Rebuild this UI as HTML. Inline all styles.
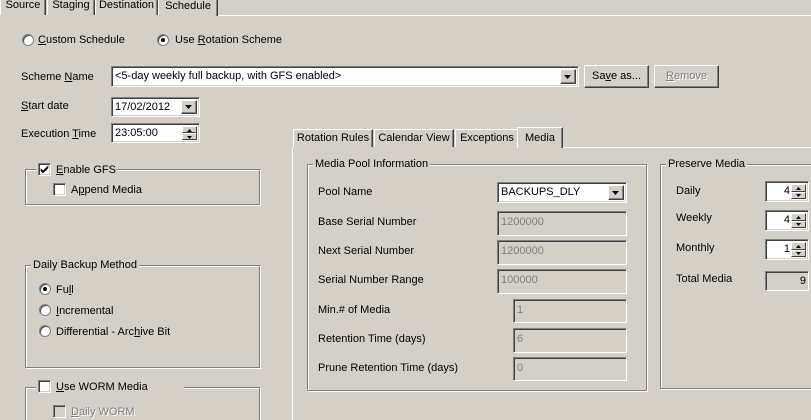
<!DOCTYPE html>
<html><head><style>
html,body{margin:0;width:811px;height:420px;overflow:hidden}
body{background:#d4d0c8;position:relative;font-family:"Liberation Sans",Arial,sans-serif;font-size:11px;color:#000}
.a{position:absolute;white-space:nowrap}
.t{position:absolute;white-space:nowrap;line-height:13px}
.sunk{position:absolute;background:#fff;border:1px solid;border-color:#808080 #fff #fff #808080;box-shadow:inset 1px 1px #404040,inset -1px -1px #d4d0c8;box-sizing:border-box;padding-left:3px;white-space:nowrap}
.dis{background:#d4d0c8;color:#808080}
.btn{position:absolute;box-sizing:border-box;border:1px solid;border-color:#fff #404040 #404040 #fff;box-shadow:inset -1px -1px #808080;text-align:center;background:#d4d0c8}
.dd{position:absolute;right:2px;top:2px;width:16px;height:calc(100% - 4px);box-sizing:border-box;border:1px solid;border-color:#fff #404040 #404040 #fff;box-shadow:inset -1px -1px #808080;background:#d4d0c8}
.dd svg{position:absolute;left:3px;top:50%;margin-top:-2px}
.grp{position:absolute;box-sizing:border-box;border:1px solid #808080;box-shadow:inset 1px 1px #fff,1px 1px #fff}
.lab{position:absolute;top:-7px;background:#d4d0c8;padding:0 2px;line-height:13px}
.rad{position:absolute;width:12px;height:12px;border-radius:50%;background:#fff;box-sizing:border-box;border:1px solid #808080;box-shadow:inset 1px 1px #404040}
.rad.on:after{content:"";position:absolute;left:3px;top:3px;width:4px;height:4px;border-radius:50%;background:#000}
.chk{position:absolute;width:13px;height:13px;background:#fff;box-sizing:border-box;border:1px solid;border-color:#808080 #fff #fff #808080;box-shadow:inset 1px 1px #404040,inset -1px -1px #d4d0c8}
.tab{position:absolute;box-sizing:border-box;border:1px solid;border-color:#fff #404040 transparent #fff;border-bottom:0;box-shadow:inset -1px 0 #808080;text-align:center;line-height:14px}
.spin{position:absolute;right:2px;width:15px;top:2px;height:calc(100% - 4px)}
.spin div{position:absolute;left:0;right:0;height:50%;box-sizing:border-box;border:1px solid;border-color:#fff #404040 #404040 #fff;background:#d4d0c8}
.spin div svg{position:absolute;left:4px;top:50%;margin-top:-1px}
u{text-decoration:underline}
</style></head><body>
<!-- top tabs -->
<div class="tab" style="left:0;top:-3px;width:46px;height:18px">Source</div>
<div class="tab" style="left:47px;top:-3px;width:48px;height:18px">Staging</div>
<div class="tab" style="left:95px;top:-3px;width:63px;height:18px">Destination</div>
<div class="tab" style="left:158px;top:-3px;width:60px;height:19px;background:#d4d0c8;line-height:16px">Schedule</div>
<div class="a" style="left:218px;top:15px;width:593px;height:1px;background:#fff"></div>

<div class="rad" style="left:22px;top:34px"></div><div class="t" style="left:38px;top:34px"><u>C</u>ustom Schedule</div>
<div class="rad on" style="left:157px;top:34px"></div><div class="t" style="left:175px;top:34px">Use <u>R</u>otation Scheme</div>

<div class="t" style="left:21px;top:71px">Scheme <u>N</u>ame</div>
<div class="sunk" style="left:111px;top:66px;width:468px;height:21px;line-height:19px">&lt;5-day weekly full backup, with GFS enabled&gt;<div class="dd"><svg width="9" height="5"><path d="M0 0h7l-3.5 4z" fill="#000"/></svg></div></div>
<div class="btn" style="left:584px;top:65px;width:65px;height:23px;line-height:20px">Sa<u>v</u>e as...</div>
<div class="btn" style="left:654px;top:65px;width:65px;height:23px;line-height:20px;color:#808080;text-shadow:1px 1px #fff"><u>R</u>emove</div>

<div class="t" style="left:21px;top:100px"><u>S</u>tart date</div>
<div class="sunk" style="left:111px;top:97px;width:89px;height:20px;line-height:18px">17/02/2012<div class="dd"><svg width="9" height="5"><path d="M0 0h7l-3.5 4z" fill="#000"/></svg></div></div>
<div class="t" style="left:21px;top:128px">Execution <u>T</u>ime</div>
<div class="sunk" style="left:111px;top:123px;width:89px;height:20px;line-height:18px">23:05:00<div class="spin"><div style="top:0"><svg width="5" height="3"><path d="M0 3h5L2.5 0z"/></svg></div><div style="bottom:0"><svg width="5" height="3"><path d="M0 0h5L2.5 3z"/></svg></div></div></div>

<!-- GFS -->
<div class="grp" style="left:25px;top:169px;width:235px;height:36px"></div>
<div class="a" style="left:36px;top:162px;width:80px;height:14px;background:#d4d0c8"></div>
<div class="chk" style="left:38px;top:163px"><svg style="position:absolute;left:1px;top:1px" width="9" height="9"><path d="M1 4l2 2 5-5v2l-5 5-2-2z" fill="#000" stroke="#000" stroke-width="0.6"/></svg></div>
<div class="t" style="left:56px;top:164px"><u>E</u>nable GFS</div>
<div class="chk" style="left:53px;top:183px"></div><div class="t" style="left:71px;top:184px">A<u>p</u>pend Media</div>

<!-- Daily Backup -->
<div class="grp" style="left:25px;top:265px;width:235px;height:103px"><div class="lab" style="left:5px">Daily Backup Method</div></div>
<div class="rad on" style="left:39px;top:283px"></div><div class="t" style="left:56px;top:284px">Fu<u>l</u>l</div>
<div class="rad" style="left:39px;top:304px"></div><div class="t" style="left:56px;top:305px"><u>I</u>ncremental</div>
<div class="rad" style="left:39px;top:325px"></div><div class="t" style="left:56px;top:326px">Differential - Arc<u>h</u>ive Bit</div>

<!-- WORM -->
<div class="grp" style="left:25px;top:387px;width:235px;height:50px"></div>
<div class="a" style="left:36px;top:379px;width:148px;height:14px;background:#d4d0c8"></div>
<div class="chk" style="left:38px;top:380px"></div><div class="t" style="left:56px;top:381px"><u>U</u>se WORM Media</div>
<div class="chk" style="left:53px;top:405px;background:#d4d0c8"></div><div class="t" style="left:71px;top:406px;color:#808080;text-shadow:1px 1px #fff"><u>D</u>aily WORM</div>

<!-- inner tabs -->
<div class="a" style="left:292px;top:147px;width:1px;height:273px;background:#fff"></div>
<div class="a" style="left:562px;top:147px;width:249px;height:1px;background:#fff"></div>
<div class="tab" style="left:293px;top:129px;width:80px;height:18px;line-height:16px">Rotation Rules</div>
<div class="tab" style="left:374px;top:129px;width:80px;height:18px;line-height:16px">Calendar View</div>
<div class="tab" style="left:455px;top:129px;width:64px;height:18px;line-height:16px">Exceptions</div>
<div class="tab" style="left:517px;top:127px;width:46px;height:21px;background:#d4d0c8;line-height:20px">Media</div>

<!-- Media Pool -->
<div class="grp" style="left:307px;top:164px;width:340px;height:227px"><div class="lab" style="left:5px">Media Pool Information</div></div>
<div class="t" style="left:318px;top:186px">Pool Name</div>
<div class="sunk" style="left:497px;top:182px;width:130px;height:21px;line-height:19px">BACKUPS_DLY<div class="dd"><svg width="9" height="5"><path d="M0 0h7l-3.5 4z" fill="#000"/></svg></div></div>
<div class="t" style="left:318px;top:216px">Base Serial Number</div>
<div class="sunk dis" style="left:497px;top:211px;width:130px;height:25px;line-height:21px">1200000</div>
<div class="t" style="left:318px;top:245px">Next Serial Number</div>
<div class="sunk dis" style="left:497px;top:240px;width:130px;height:25px;line-height:21px">1200000</div>
<div class="t" style="left:318px;top:274px">Serial Number Range</div>
<div class="sunk dis" style="left:497px;top:269px;width:130px;height:25px;line-height:21px">100000</div>
<div class="t" style="left:318px;top:304px">Min.# of Media</div>
<div class="sunk dis" style="left:513px;top:299px;width:114px;height:24px;line-height:21px">1</div>
<div class="t" style="left:318px;top:333px">Retention Time (days)</div>
<div class="sunk dis" style="left:513px;top:328px;width:114px;height:25px;line-height:21px">6</div>
<div class="t" style="left:318px;top:362px">Prune Retention Time (days)</div>
<div class="sunk dis" style="left:513px;top:357px;width:114px;height:24px;line-height:21px">0</div>

<!-- Preserve Media -->
<div class="grp" style="left:660px;top:164px;width:160px;height:225px"><div class="lab" style="left:5px">Preserve Media</div></div>
<div class="t" style="left:676px;top:185px">Daily</div>
<div class="sunk" style="left:765px;top:181px;width:44px;height:21px;text-align:right;padding-right:18px;line-height:19px">4<div class="spin"><div style="top:0"><svg width="5" height="3"><path d="M0 3h5L2.5 0z"/></svg></div><div style="bottom:0"><svg width="5" height="3"><path d="M0 0h5L2.5 3z"/></svg></div></div></div>
<div class="t" style="left:676px;top:212px">Weekly</div>
<div class="sunk" style="left:765px;top:210px;width:44px;height:21px;text-align:right;padding-right:18px;line-height:19px">4<div class="spin"><div style="top:0"><svg width="5" height="3"><path d="M0 3h5L2.5 0z"/></svg></div><div style="bottom:0"><svg width="5" height="3"><path d="M0 0h5L2.5 3z"/></svg></div></div></div>
<div class="t" style="left:676px;top:242px">Monthly</div>
<div class="sunk" style="left:765px;top:239px;width:44px;height:21px;text-align:right;padding-right:18px;line-height:19px">1<div class="spin"><div style="top:0"><svg width="5" height="3"><path d="M0 3h5L2.5 0z"/></svg></div><div style="bottom:0"><svg width="5" height="3"><path d="M0 0h5L2.5 3z"/></svg></div></div></div>
<div class="t" style="left:676px;top:273px">Total Media</div>
<div class="sunk dis" style="left:765px;top:271px;width:44px;height:20px;text-align:right;padding-right:2px;line-height:18px;color:#000">9</div>
</body></html>
